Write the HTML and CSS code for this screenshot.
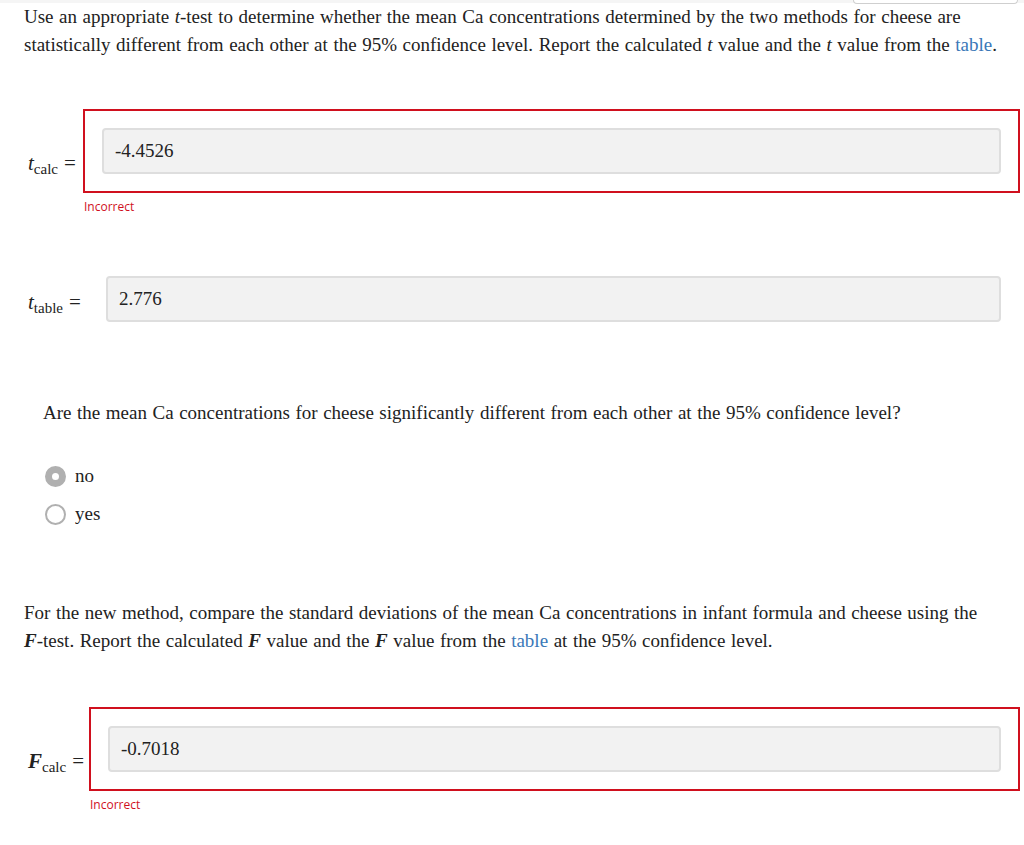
FILE: index.html
```html
<!DOCTYPE html>
<html lang="en">
<head>
  <meta charset="UTF-8">
  <meta name="viewport" content="width=device-width, initial-scale=1.0">
  <title>t-test and F-test</title>
  <link rel="stylesheet" href="styles.css">
</head>
<body>
  <div class="topbar"><div class="topbar-tab"></div></div>

  <p class="prompt">Use an appropriate <i>t</i>-test to determine whether the mean Ca concentrations determined by the two methods for cheese are statistically different from each other at the 95% confidence level. Report the calculated <i>t</i> value and the <i>t</i> value from the <a class="link" href="#">table</a>.</p>

  <div class="answer answer-tcalc">
    <span class="math-label"><i>t</i><sub>calc</sub><span class="eq">=</span></span>
    <div class="answer-body">
      <div class="field-box is-wrong"><div class="field">-4.4526</div></div>
      <div class="feedback">Incorrect</div>
    </div>
  </div>

  <div class="answer answer-ttable">
    <span class="math-label"><i>t</i><sub>table</sub><span class="eq">=</span></span>
    <div class="answer-body">
      <div class="field-box"><div class="field">2.776</div></div>
    </div>
  </div>

  <p class="question">Are the mean Ca concentrations for cheese significantly different from each other at the 95% confidence level?</p>

  <ul class="choices">
    <li class="choice"><span class="radio is-checked"></span>no</li>
    <li class="choice"><span class="radio"></span>yes</li>
  </ul>

  <p class="prompt prompt-f">For the new method, compare the standard deviations of the mean Ca concentrations in infant formula and cheese using the <i class="var-f">F</i>-test. Report the calculated <i class="var-f">F</i> value and the <i class="var-f">F</i> value from the <a class="link" href="#">table</a> at the 95% confidence level.</p>

  <div class="answer answer-fcalc">
    <span class="math-label"><i class="var-f">F</i><sub>calc</sub><span class="eq">=</span></span>
    <div class="answer-body">
      <div class="field-box is-wrong"><div class="field">-0.7018</div></div>
      <div class="feedback">Incorrect</div>
    </div>
  </div>
</body>
</html>
```

FILE: styles.css
```css
body {
  margin: 0;
  font-family: "Liberation Serif", "Times New Roman", serif;
  font-size: 19px;
  word-spacing: 0.8px;
  color: #222;
  background: #fff;
}

/* strip left over from the block above */
.topbar {
  display: flex;
  justify-content: flex-end;
  height: 3px;
  background: #f5f5f5;
}

.topbar-tab {
  width: 165px;
  height: 4px;
  margin-right: 6px;
  box-sizing: border-box;
  background: #fff;
  border: 1px solid #cfcfcf;
  border-top: none;
  border-radius: 0 0 4px 4px;
}

.prompt {
  margin: 0;
  padding: 0 24px;
  line-height: 28px;
}

.prompt-f {
  margin-top: 66px;
}

.link {
  color: #3a78b8;
  text-decoration: none;
}

.var-f {
  font-weight: bold;
}

.answer {
  display: flex;
  align-items: flex-start;
  padding-left: 28px;
  margin-right: 4px;
}

.answer-tcalc {
  margin-top: 50px;
}

.answer-ttable {
  margin-top: 42px;
}

.answer-fcalc {
  margin-top: 52px;
}

.math-label {
  flex: none;
  font-size: 21px;
  line-height: 20px;
  word-spacing: 0;
  white-space: nowrap;
}

.math-label sub {
  font-size: 15px;
  vertical-align: -4px;
  line-height: 0;
}

.math-label .eq {
  margin-left: 6px;
}

.answer-tcalc .math-label {
  width: 55px;
  margin-top: 44px;
}

.answer-ttable .math-label {
  width: 59px;
  margin-top: 35px;
}

.answer-fcalc .math-label {
  width: 61px;
  margin-top: 44px;
}

.answer-body {
  flex: 1;
}

.field-box {
  padding: 17px;
  border: 2px solid transparent;
}

/* 答错时的红框 */
.field-box.is-wrong {
  border-color: #d0101e;
}

.field {
  height: 46px;
  box-sizing: border-box;
  padding: 0 11px;
  line-height: 42px;
  background: #f2f2f2;
  border: 2px solid #dedede;
  border-radius: 4px;
}

.feedback {
  margin-top: 6px;
  padding-left: 1px;
  font-family: "Open Sans", "Liberation Sans", sans-serif;
  font-size: 12px;
  line-height: 16px;
  word-spacing: 0;
  color: #d0101e;
}

.question {
  margin: 58px 0 0;
  padding-left: 43px;
  line-height: 28px;
}

.choices {
  margin: 30px 0 0;
  padding: 0 0 0 45px;
  list-style: none;
}

.choice {
  display: flex;
  align-items: center;
  gap: 9px;
  height: 38px;
}

.radio {
  width: 21px;
  height: 21px;
  box-sizing: border-box;
  border: 2px solid #b0b0b0;
  border-radius: 50%;
  background: #fff;
}

.radio.is-checked {
  border-width: 7px;
}
```
